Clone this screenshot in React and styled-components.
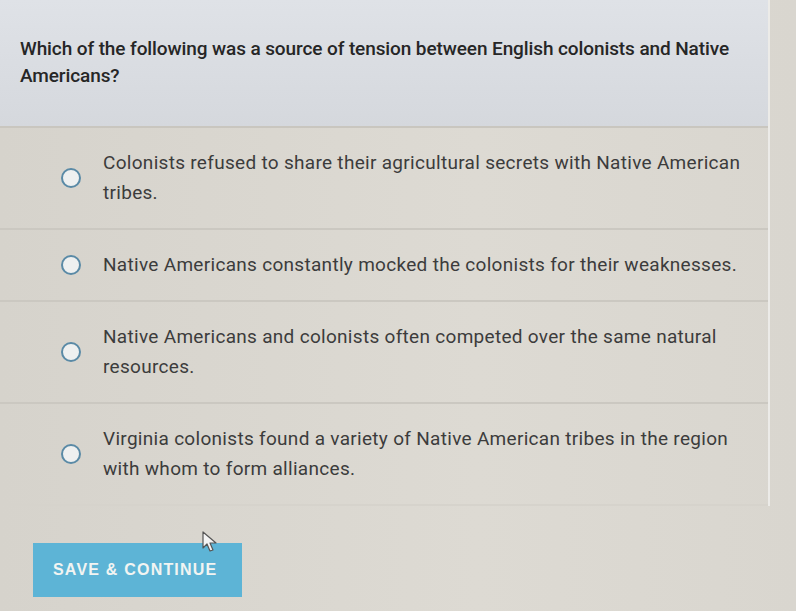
import React from 'react';
import styled, { createGlobalStyle } from 'styled-components';

const Global = createGlobalStyle`
  html, body {
    margin: 0;
    padding: 0;
    background: #e1ded8;
  }
  body {
    font-family: Roboto, "Liberation Sans", Arial, sans-serif;
    width: 796px;
    height: 611px;
    overflow: hidden;
  }
`;

const Page = styled.div`
  position: relative;
  width: 796px;
  height: 611px;
  background: linear-gradient(90deg, #d6d3cc 0%, #dddad3 60%, #d9d6cf 100%);
`;

const Column = styled.div`
  width: 768px;
  border-right: 2px solid #ecebe8;
`;

const Question = styled.div`
  height: 128px;
  box-sizing: border-box;
  padding: 35px 20px 0 20px;
  background: linear-gradient(180deg, #dfe2e7 0%, #d5d8dd 100%);
  border-bottom: 2px solid #c9c6bf;
  color: #262626;
  font-size: 19px;
  font-weight: 500;
  line-height: 27px;
  letter-spacing: -0.1px;
`;

const QuestionText = styled.div`
  max-width: 728px;
`;

const Options = styled.div`
  display: flex;
  flex-direction: column;
`;

const Option = styled.label`
  display: flex;
  align-items: center;
  gap: 22px;
  padding: 20px 20px 20px 61px;
  border-bottom: 2px solid ${p => (p.$faint ? '#d6d3cc' : '#cbc8c1')};
  color: #3c3c3c;
  font-size: 19px;
  line-height: 30px;
  letter-spacing: 0.3px;
  cursor: pointer;
`;

const Answer = styled.span`
  max-width: 642px;
`;

const Radio = styled.span`
  flex: none;
  width: 16px;
  height: 16px;
  border-radius: 50%;
  border: 2px solid #5a8aa6;
  background: #eef0f0;
`;

const Footer = styled.div`
  position: relative;
  padding: 37px 0 0 33px;
`;

const Button = styled.button`
  width: 209px;
  height: 54px;
  border: none;
  background: #5db4d6;
  color: #f2f4f2;
  font-family: "Liberation Sans", Arial, sans-serif;
  font-size: 16px;
  font-weight: 700;
  letter-spacing: 1.2px;
  text-align: left;
  padding: 0 0 0 20px;
`;

const Cursor = styled.svg`
  position: absolute;
  left: 202px;
  top: 25px;
`;

const answers = [
  'Colonists refused to share their agricultural secrets with Native American tribes.',
  'Native Americans constantly mocked the colonists for their weaknesses.',
  'Native Americans and colonists often competed over the same natural resources.',
  'Virginia colonists found a variety of Native American tribes in the region with whom to form alliances.',
];

export default function App() {
  return (
    <Page>
      <Global />
      <Column>
        <Question>
          <QuestionText>
            Which of the following was a source of tension between English colonists and Native
            Americans?
          </QuestionText>
        </Question>
        <Options>
          {answers.map((a, i) => (
            <Option key={i} $faint={i === 3}>
              <Radio />
              <Answer>{a}</Answer>
            </Option>
          ))}
        </Options>
      </Column>
      <Footer>
        <Button>SAVE &amp; CONTINUE</Button>
        <Cursor width="16" height="22" viewBox="0 0 16 22">
          <path d="M1 1 L1 17 L5 13 L8 20 L11 19 L8 12 L14 12 Z" fill="#f4f4f4" stroke="#555" strokeWidth="1.2" strokeLinejoin="round" />
        </Cursor>
      </Footer>
    </Page>
  );
}
